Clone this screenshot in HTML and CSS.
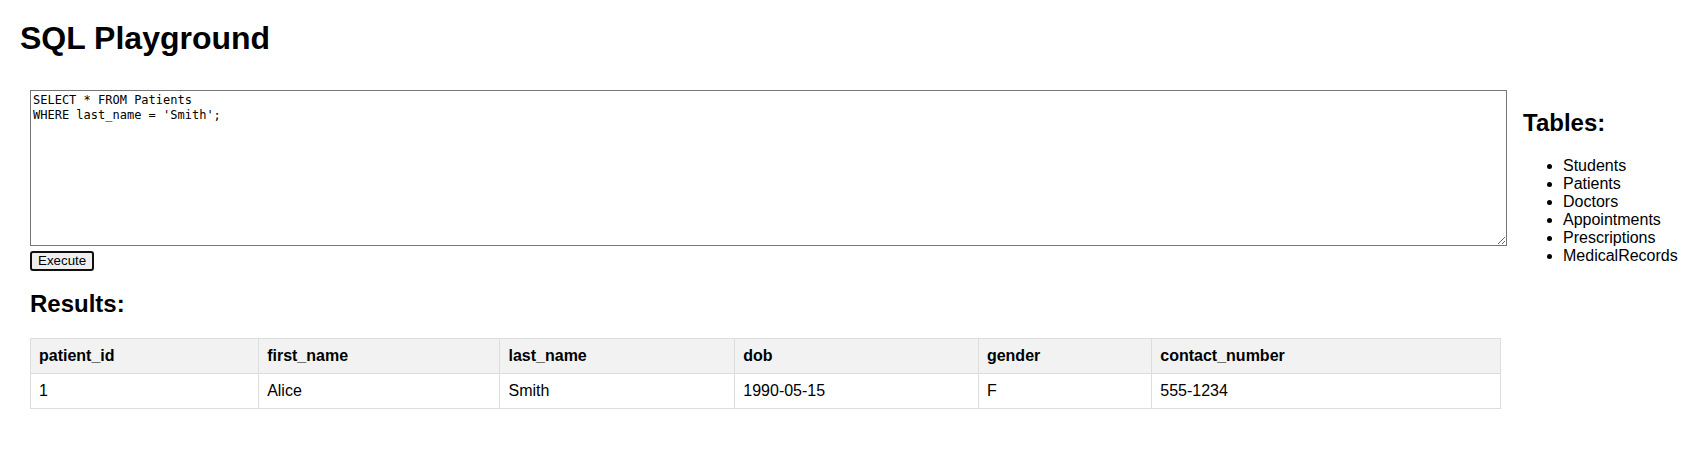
FILE: index.html
```html
<!DOCTYPE html>
<html lang="en">
<head>
<meta charset="utf-8">
<title>SQL Playground</title>
<link rel="stylesheet" href="styles.css">
</head>
<body>
<h1 class="title">SQL Playground</h1>
<div class="layout">
  <div class="editor">
    <textarea class="query" spellcheck="false">SELECT * FROM Patients
WHERE last_name = 'Smith';</textarea>
    <button class="run">Execute</button>
    <h2 class="heading">Results:</h2>
    <table class="results">
      <thead>
        <tr><th>patient_id</th><th>first_name</th><th>last_name</th><th>dob</th><th>gender</th><th>contact_number</th></tr>
      </thead>
      <tbody>
        <tr><td>1</td><td>Alice</td><td>Smith</td><td>1990-05-15</td><td>F</td><td>555-1234</td></tr>
      </tbody>
    </table>
  </div>
  <aside class="sidebar">
    <h2 class="heading">Tables:</h2>
    <ul class="table-list">
      <li>Students</li>
      <li>Patients</li>
      <li>Doctors</li>
      <li>Appointments</li>
      <li>Prescriptions</li>
      <li>MedicalRecords</li>
    </ul>
  </aside>
</div>
</body>
</html>
```

FILE: styles.css
```css
html, body {
  background: #ffffff;
}
body {
  margin: 0;
  padding: 20px;
  font-family: "Liberation Sans", Arial, sans-serif;
  font-size: 16px;
  color: #000000;
}
.title {
  font-size: 32px;
  font-weight: bold;
  margin: 0 0 22.5px 0;
}
.layout {
  display: flex;
  align-items: flex-start;
}
.editor {
  flex: 1;
  min-width: 0;
  padding: 10px;
}
.sidebar {
  width: 157px;
  flex: none;
  padding: 10px 0 10px 12px;
}
.query {
  display: block;
  width: 100%;
  height: 150px;
  box-sizing: content-box;
  padding: 2px;
  margin: 0;
  border: 1px solid #767676;
  font-family: "DejaVu Sans Mono", monospace;
  font-size: 12px;
  line-height: 15px;
  color: #000000;
  background: #ffffff;
}
.run {
  display: block;
  margin-top: 5px;
  height: 20px;
  padding: 0 6px;
  border: 2px solid #101010;
  border-radius: 3px;
  background: #efefef;
  font-family: "Liberation Sans", Arial, sans-serif;
  font-size: 13.33px;
  line-height: 16px;
  color: #000000;
}
.heading {
  font-size: 24px;
  font-weight: bold;
  margin: 19.92px 0;
}
.results {
  width: 100%;
  border-collapse: collapse;
  border: 1px solid #dddddd;
}
.results th,
.results td {
  border: 1px solid #dddddd;
  padding: 8px;
  text-align: left;
  font-size: 16px;
}
.results th {
  background: #f2f2f2;
  font-weight: bold;
}
.table-list {
  margin: 16px 0;
  padding-left: 40px;
}
```
